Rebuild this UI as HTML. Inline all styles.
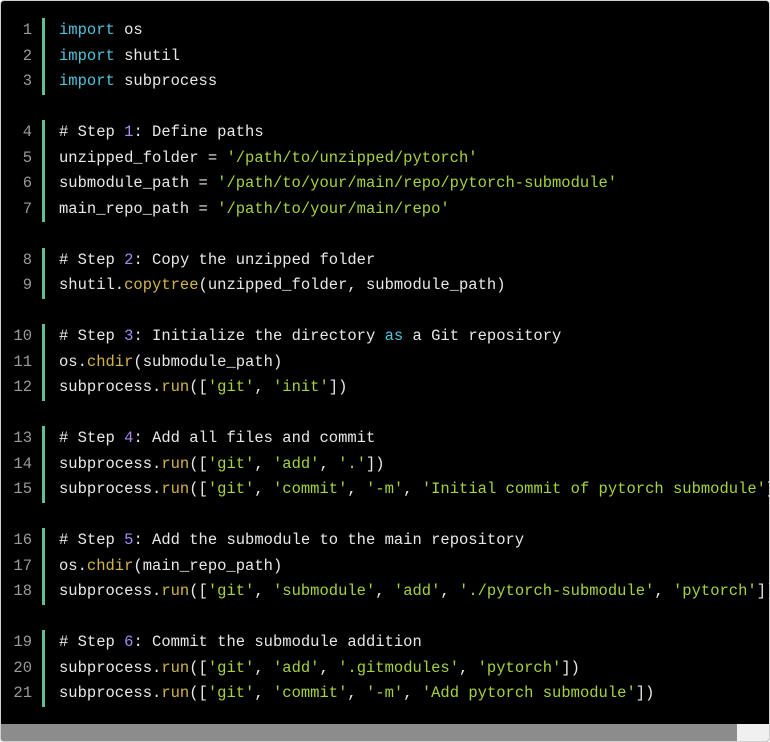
<!DOCTYPE html>
<html><head><meta charset="utf-8"><style>
html,body{margin:0;padding:0;background:#fff;}
.wrap{position:relative;width:768px;height:740px;border:1px solid #d0d0d0;border-radius:4px;background:#000;overflow:hidden;}
.code{position:absolute;left:0;top:17px;font-family:"Liberation Mono",monospace;font-size:15.5px;line-height:25.5px;color:#e8e8e8;white-space:nowrap;}
.g{position:relative;margin-bottom:25.5px;}
.g::before{content:"";position:absolute;left:41px;top:0;bottom:0;width:3px;background:#5fbf95;}
.l{display:block;height:25.5px;white-space:pre;}
.n{display:inline-block;width:31px;text-align:right;color:#9a9a9a;margin-right:27px;}
.k{color:#4ec3dc}.s{color:#a6d23a}.f{color:#d2b548}.m{color:#a88aef}
.sb{position:absolute;left:0;top:723px;width:736px;height:17px;background:#8c8c8c;}
.tr{position:absolute;left:736px;top:723px;width:34px;height:17px;background:#f0f0f0;}
</style></head><body><div class="wrap"><div class="code"><div class="g"><span class="l"><span class="n">1</span><span class="k">import</span> os</span><span class="l"><span class="n">2</span><span class="k">import</span> shutil</span><span class="l"><span class="n">3</span><span class="k">import</span> subprocess</span></div><div class="g"><span class="l"><span class="n">4</span># Step <span class="m">1</span>: Define paths</span><span class="l"><span class="n">5</span>unzipped_folder = <span class="s">'/path/to/unzipped/pytorch'</span></span><span class="l"><span class="n">6</span>submodule_path = <span class="s">'/path/to/your/main/repo/pytorch-submodule'</span></span><span class="l"><span class="n">7</span>main_repo_path = <span class="s">'/path/to/your/main/repo'</span></span></div><div class="g"><span class="l"><span class="n">8</span># Step <span class="m">2</span>: Copy the unzipped folder</span><span class="l"><span class="n">9</span>shutil.<span class="f">copytree</span>(unzipped_folder, submodule_path)</span></div><div class="g"><span class="l"><span class="n">10</span># Step <span class="m">3</span>: Initialize the directory <span class="k">as</span> a Git repository</span><span class="l"><span class="n">11</span>os.<span class="f">chdir</span>(submodule_path)</span><span class="l"><span class="n">12</span>subprocess.<span class="f">run</span>([<span class="s">'git'</span>, <span class="s">'init'</span>])</span></div><div class="g"><span class="l"><span class="n">13</span># Step <span class="m">4</span>: Add all files and commit</span><span class="l"><span class="n">14</span>subprocess.<span class="f">run</span>([<span class="s">'git'</span>, <span class="s">'add'</span>, <span class="s">'.'</span>])</span><span class="l"><span class="n">15</span>subprocess.<span class="f">run</span>([<span class="s">'git'</span>, <span class="s">'commit'</span>, <span class="s">'-m'</span>, <span class="s">'Initial commit of pytorch submodule'</span>])</span></div><div class="g"><span class="l"><span class="n">16</span># Step <span class="m">5</span>: Add the submodule to the main repository</span><span class="l"><span class="n">17</span>os.<span class="f">chdir</span>(main_repo_path)</span><span class="l"><span class="n">18</span>subprocess.<span class="f">run</span>([<span class="s">'git'</span>, <span class="s">'submodule'</span>, <span class="s">'add'</span>, <span class="s">'./pytorch-submodule'</span>, <span class="s">'pytorch'</span>])</span></div><div class="g"><span class="l"><span class="n">19</span># Step <span class="m">6</span>: Commit the submodule addition</span><span class="l"><span class="n">20</span>subprocess.<span class="f">run</span>([<span class="s">'git'</span>, <span class="s">'add'</span>, <span class="s">'.gitmodules'</span>, <span class="s">'pytorch'</span>])</span><span class="l"><span class="n">21</span>subprocess.<span class="f">run</span>([<span class="s">'git'</span>, <span class="s">'commit'</span>, <span class="s">'-m'</span>, <span class="s">'Add pytorch submodule'</span>])</span></div></div><div class="sb"></div><div class="tr"></div></div></body></html>
